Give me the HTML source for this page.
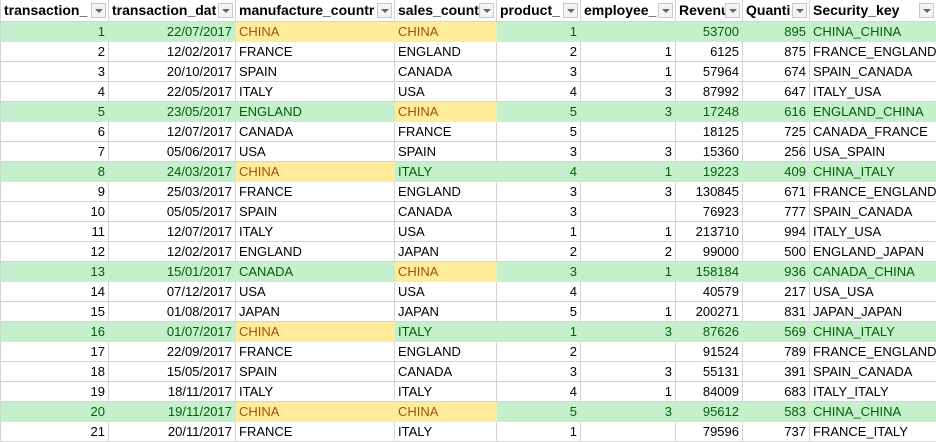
<!DOCTYPE html>
<html><head><meta charset="utf-8"><style>
body{margin:0;background:#fff;width:936px;height:441px;overflow:hidden;font-family:"Liberation Sans",Arial,sans-serif;}
table{border-collapse:collapse;table-layout:fixed;position:absolute;left:0;top:0;width:936px;}
td{box-sizing:border-box;height:20px;padding:0 3px;border-right:1px solid #d4d4d4;border-bottom:1px solid #d4d4d4;font-size:13px;white-space:nowrap;overflow:hidden;color:#000;line-height:19px;}
tr.h td{height:21px;font-weight:bold;font-size:14px;position:relative;padding-right:18px;}
.dd{position:absolute;right:2px;top:3px;width:15px;height:15px;border:1px solid #c8c8c8;background:#f4f4f4;box-sizing:border-box;}
.dd:after{content:"";position:absolute;left:3px;top:5px;border-left:4px solid transparent;border-right:4px solid transparent;border-top:4px solid #666;}
.r{text-align:right}
td.g{background:#c6efce;color:#006100;border-color:#c6efce;}
td.y{background:#ffeb9c;color:#9c5700;border-color:#ffeb9c;}
td:first-child{border-left:1px solid #d4d4d4;}
</style></head><body>
<table>
<colgroup><col style="width:108px"><col style="width:127px"><col style="width:159px"><col style="width:102px"><col style="width:84px"><col style="width:95px"><col style="width:67px"><col style="width:67px"><col style="width:127px"></colgroup>
<tr class="h"><td>transaction_<span class="dd"></span></td><td>transaction_dat<span class="dd"></span></td><td>manufacture_countr<span class="dd"></span></td><td>sales_count<span class="dd"></span></td><td>product_<span class="dd"></span></td><td>employee_<span class="dd"></span></td><td>Revenu<span class="dd"></span></td><td>Quanti<span class="dd"></span></td><td>Security_key<span class="dd"></span></td></tr>
<tr><td class="r g">1</td><td class="r g">22/07/2017</td><td class="y">CHINA</td><td class="y">CHINA</td><td class="r g">1</td><td class="r g"></td><td class="r g">53700</td><td class="r g">895</td><td class="g">CHINA_CHINA</td></tr>
<tr><td class="r">2</td><td class="r">12/02/2017</td><td>FRANCE</td><td>ENGLAND</td><td class="r">2</td><td class="r">1</td><td class="r">6125</td><td class="r">875</td><td>FRANCE_ENGLAND</td></tr>
<tr><td class="r">3</td><td class="r">20/10/2017</td><td>SPAIN</td><td>CANADA</td><td class="r">3</td><td class="r">1</td><td class="r">57964</td><td class="r">674</td><td>SPAIN_CANADA</td></tr>
<tr><td class="r">4</td><td class="r">22/05/2017</td><td>ITALY</td><td>USA</td><td class="r">4</td><td class="r">3</td><td class="r">87992</td><td class="r">647</td><td>ITALY_USA</td></tr>
<tr><td class="r g">5</td><td class="r g">23/05/2017</td><td class="g">ENGLAND</td><td class="y">CHINA</td><td class="r g">5</td><td class="r g">3</td><td class="r g">17248</td><td class="r g">616</td><td class="g">ENGLAND_CHINA</td></tr>
<tr><td class="r">6</td><td class="r">12/07/2017</td><td>CANADA</td><td>FRANCE</td><td class="r">5</td><td class="r"></td><td class="r">18125</td><td class="r">725</td><td>CANADA_FRANCE</td></tr>
<tr><td class="r">7</td><td class="r">05/06/2017</td><td>USA</td><td>SPAIN</td><td class="r">3</td><td class="r">3</td><td class="r">15360</td><td class="r">256</td><td>USA_SPAIN</td></tr>
<tr><td class="r g">8</td><td class="r g">24/03/2017</td><td class="y">CHINA</td><td class="g">ITALY</td><td class="r g">4</td><td class="r g">1</td><td class="r g">19223</td><td class="r g">409</td><td class="g">CHINA_ITALY</td></tr>
<tr><td class="r">9</td><td class="r">25/03/2017</td><td>FRANCE</td><td>ENGLAND</td><td class="r">3</td><td class="r">3</td><td class="r">130845</td><td class="r">671</td><td>FRANCE_ENGLAND</td></tr>
<tr><td class="r">10</td><td class="r">05/05/2017</td><td>SPAIN</td><td>CANADA</td><td class="r">3</td><td class="r"></td><td class="r">76923</td><td class="r">777</td><td>SPAIN_CANADA</td></tr>
<tr><td class="r">11</td><td class="r">12/07/2017</td><td>ITALY</td><td>USA</td><td class="r">1</td><td class="r">1</td><td class="r">213710</td><td class="r">994</td><td>ITALY_USA</td></tr>
<tr><td class="r">12</td><td class="r">12/02/2017</td><td>ENGLAND</td><td>JAPAN</td><td class="r">2</td><td class="r">2</td><td class="r">99000</td><td class="r">500</td><td>ENGLAND_JAPAN</td></tr>
<tr><td class="r g">13</td><td class="r g">15/01/2017</td><td class="g">CANADA</td><td class="y">CHINA</td><td class="r g">3</td><td class="r g">1</td><td class="r g">158184</td><td class="r g">936</td><td class="g">CANADA_CHINA</td></tr>
<tr><td class="r">14</td><td class="r">07/12/2017</td><td>USA</td><td>USA</td><td class="r">4</td><td class="r"></td><td class="r">40579</td><td class="r">217</td><td>USA_USA</td></tr>
<tr><td class="r">15</td><td class="r">01/08/2017</td><td>JAPAN</td><td>JAPAN</td><td class="r">5</td><td class="r">1</td><td class="r">200271</td><td class="r">831</td><td>JAPAN_JAPAN</td></tr>
<tr><td class="r g">16</td><td class="r g">01/07/2017</td><td class="y">CHINA</td><td class="g">ITALY</td><td class="r g">1</td><td class="r g">3</td><td class="r g">87626</td><td class="r g">569</td><td class="g">CHINA_ITALY</td></tr>
<tr><td class="r">17</td><td class="r">22/09/2017</td><td>FRANCE</td><td>ENGLAND</td><td class="r">2</td><td class="r"></td><td class="r">91524</td><td class="r">789</td><td>FRANCE_ENGLAND</td></tr>
<tr><td class="r">18</td><td class="r">15/05/2017</td><td>SPAIN</td><td>CANADA</td><td class="r">3</td><td class="r">3</td><td class="r">55131</td><td class="r">391</td><td>SPAIN_CANADA</td></tr>
<tr><td class="r">19</td><td class="r">18/11/2017</td><td>ITALY</td><td>ITALY</td><td class="r">4</td><td class="r">1</td><td class="r">84009</td><td class="r">683</td><td>ITALY_ITALY</td></tr>
<tr><td class="r g">20</td><td class="r g">19/11/2017</td><td class="y">CHINA</td><td class="y">CHINA</td><td class="r g">5</td><td class="r g">3</td><td class="r g">95612</td><td class="r g">583</td><td class="g">CHINA_CHINA</td></tr>
<tr><td class="r">21</td><td class="r">20/11/2017</td><td>FRANCE</td><td>ITALY</td><td class="r">1</td><td class="r"></td><td class="r">79596</td><td class="r">737</td><td>FRANCE_ITALY</td></tr>
</table>
</body></html>
